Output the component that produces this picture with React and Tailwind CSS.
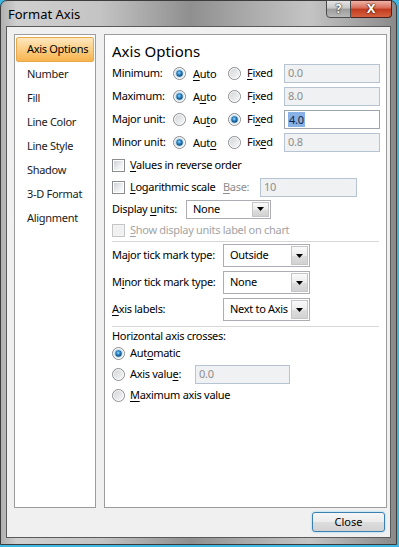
import React from "react";

const FONT = "font-['Noto_Sans',sans-serif]";

function U({ children }) {
  return <span className="underline underline-offset-[2px] decoration-[1px]">{children}</span>;
}

function Radio({ checked }) {
  return (
    <svg width="13" height="13" viewBox="0 0 13 13" className="shrink-0">
      <circle cx="6.5" cy="6.5" r="6" fill="url(#rbg)" stroke="#8a8c8e" strokeWidth="1" />
      <circle cx="6.5" cy="6.5" r="5" fill="none" stroke="#ffffff" strokeOpacity="0.7" strokeWidth="1" />
      {checked && (
        <>
          <circle cx="6.5" cy="6.5" r="4.2" fill="#bfe3f7" />
          <circle cx="6.5" cy="6.5" r="3.2" fill="url(#rdot)" />
        </>
      )}
    </svg>
  );
}

function Check({ disabled }) {
  return (
    <div
      className={`w-[13px] h-[13px] shrink-0 border p-px ${
        disabled ? "border-[#c2c4c6] bg-[#f4f4f4]" : "border-[#8a8c8e] bg-white"
      }`}
    >
      <div
        className={`w-full h-full ${
          disabled
            ? "bg-[#f0f0f0]"
            : "bg-[linear-gradient(135deg,#cfd2d6_0%,#eef0f2_60%,#fbfbfb_100%)]"
        }`}
      />
    </div>
  );
}

function Arrow() {
  return (
    <svg width="7" height="4" viewBox="0 0 7 4">
      <path d="M0 0 H7 L3.5 4 Z" fill="#000" />
    </svg>
  );
}

function Select({ value, w, h }) {
  return (
    <div className={`${w} ${h} border border-[#abadb3] bg-white flex items-stretch p-px`}>
      <div className="flex-1 flex items-center pl-[5px] text-black whitespace-nowrap overflow-hidden">{value}</div>
      <div className="w-[17px] border border-[#c5c5c5] bg-[linear-gradient(180deg,#fafafa_0%,#ececec_50%,#dedede_51%,#d2d2d2_100%)] flex items-center justify-center">
        <Arrow />
      </div>
    </div>
  );
}

function Input({ value, disabled, w, selected }) {
  return (
    <div
      className={`${w} h-[19px] border flex items-center pl-[3px] ${
        disabled
          ? "border-[#b5c3d3] bg-[#f0f1f3] text-[#8d8d8d]"
          : "border-[#a0a6ad] bg-white text-black"
      }`}
    >
      {selected ? (
        <span className="bg-[#88b1e6] text-[#0e2545] px-px leading-[15px]">{value}</span>
      ) : (
        value
      )}
    </div>
  );
}

function UnitRow({ label, autoChecked, auto, fixed, value, disabled, selected }) {
  return (
    <div className="h-[23px] flex items-center whitespace-nowrap">
      <div className="w-[61px]">{label}</div>
      <Radio checked={autoChecked} />
      <div className="w-[42px] pl-[7px] pt-[2px]">{auto}</div>
      <Radio checked={!autoChecked} />
      <div className="w-[43px] pl-[6px]">{fixed}</div>
      <Input value={value} disabled={disabled} w="w-[96px]" selected={selected} />
    </div>
  );
}

const items = ["Axis Options", "Number", "Fill", "Line Color", "Line Style", "Shadow", "3-D Format", "Alignment"];

export default function App() {
  return (
    <div className={`relative w-[399px] h-[547px] bg-[#3cb8e2] ${FONT} text-[11px] tracking-[-0.3px] text-black overflow-hidden`}>
      <svg width="0" height="0" className="absolute">
        <defs>
          <radialGradient id="rdot" cx="45%" cy="40%" r="65%">
            <stop offset="0" stopColor="#9fdcf9" />
            <stop offset="0.45" stopColor="#2a82c4" />
            <stop offset="1" stopColor="#0a3a66" />
          </radialGradient>
          <linearGradient id="rbg" x1="0" y1="0" x2="1" y2="1">
            <stop offset="0" stopColor="#cfd1d4" />
            <stop offset="1" stopColor="#fbfbfb" />
          </linearGradient>
        </defs>
      </svg>
      <div className="w-[397px] h-[545px] rounded-t-[7px] border border-[#3c3c3c] bg-[linear-gradient(90deg,#b0b0b0_0%,#cfcfcf_4%,#c4c4c4_25%,#8f8f8f_48%,#a9a9a9_62%,#c4c4c4_78%,#8a8a8a_100%)] flex flex-col">
        {/* Title bar */}
        <div className="h-[25px] flex items-start justify-between pr-[4px]">
          <div className="pl-[7px] pt-[4px] text-[13px] tracking-normal text-black whitespace-nowrap">Format Axis</div>
          <div className="flex -mt-px">
            <div className="w-[25px] h-[18px] rounded-bl-[4px] border border-[#4a4a4a] bg-[linear-gradient(180deg,#e4e4e4_0%,#c6c6c6_45%,#9c9c9c_50%,#b8b8b8_100%)] flex items-center justify-center text-white font-bold text-[12px] [text-shadow:0_0_2px_#222,0_0_1px_#000]">
              ?
            </div>
            <div className="w-[41px] h-[18px] rounded-br-[4px] border border-l-0 border-[#4a2020] bg-[linear-gradient(180deg,#efb4a8_0%,#d66a55_45%,#c13a1e_50%,#d5613f_100%)] flex items-center justify-center text-white font-bold text-[13px] [text-shadow:0_0_2px_#4a0d00,0_0_1px_#000]">
              X
            </div>
          </div>
        </div>
        {/* Content */}
        <div className="mx-[5px] border border-[#5a5a5a] bg-[#f0f0f0] h-[512px] pl-[7px] pr-[3px] pt-[7px] flex flex-col">
          <div className="flex gap-[8px] h-[474px]">
            {/* Left list */}
            <div className="w-[82px] h-full border border-[#9c9c9c] bg-white pt-[1px] px-px whitespace-nowrap">
              {items.map((it, i) =>
                i === 0 ? (
                  <div
                    key={it}
                    className="h-[25px] mt-px rounded-[2px] border border-[#e7a94c] bg-[linear-gradient(180deg,#fde8bf_0%,#fbd08a_45%,#f6b44f_100%)] flex items-center pl-[10px]"
                  >
                    {it}
                  </div>
                ) : (
                  <div key={it} className="h-[24px] flex items-center pl-[11px] text-[#1a1a1a]">
                    {it}
                  </div>
                )
              )}
            </div>
            {/* Right pane */}
            <div className="w-[283px] h-full border border-[#9c9c9c] bg-white pl-[7px] pr-[6px] flex flex-col whitespace-nowrap">
              <div className="h-[27px] pt-[6px] flex items-center text-[15px] tracking-normal leading-none">Axis Options</div>
              <UnitRow label="Minimum:" autoChecked auto={<><U>A</U>uto</>} fixed={<><U>F</U>ixed</>} value="0.0" disabled />
              <UnitRow label="Maximum:" autoChecked auto={<>A<U>u</U>to</>} fixed={<>F<U>i</U>xed</>} value="8.0" disabled />
              <UnitRow label="Major unit:" autoChecked={false} auto={<>Au<U>t</U>o</>} fixed={<>Fi<U>x</U>ed</>} value="4.0" selected />
              <UnitRow label="Minor unit:" autoChecked auto={<>Aut<U>o</U></>} fixed={<>Fix<U>e</U>d</>} value="0.8" disabled />
              <div className="h-[22px] flex items-center gap-[5px]">
                <Check />
                <span><U>V</U>alues in reverse order</span>
              </div>
              <div className="h-[22px] flex items-center">
                <Check />
                <span className="pl-[5px] w-[98px]"><U>L</U>ogarithmic scale</span>
                <span className="w-[37px] text-[#8d8d8d]"><U>B</U>ase:</span>
                <Input value="10" disabled w="w-[97px]" />
              </div>
              <div className="h-[22px] flex items-center">
                <span className="w-[74px]">Display <U>u</U>nits:</span>
                <Select value="None" w="w-[85px]" h="h-[19px]" />
              </div>
              <div className="h-[20px] flex items-center gap-[5px] text-[#a3a3a3]">
                <Check disabled />
                <span><U>S</U>how display units label on chart</span>
              </div>
              <div className="mt-px h-px bg-[#d6d6d6] mr-[1px]" />
              <div className="h-[27px] flex items-center">
                <span className="w-[111px]">Major tick mark type:</span>
                <Select value="Outside" w="w-[87px]" h="h-[23px]" />
              </div>
              <div className="h-[27px] flex items-center">
                <span className="w-[111px]">M<U>i</U>nor tick mark type:</span>
                <Select value="None" w="w-[87px]" h="h-[23px]" />
              </div>
              <div className="h-[27px] flex items-center">
                <span className="w-[111px]"><U>A</U>xis labels:</span>
                <Select value="Next to Axis" w="w-[87px]" h="h-[23px]" />
              </div>
              <div className="mt-[3px] h-px bg-[#d6d6d6] mr-[1px]" />
              <div className="h-[16px] pt-[2px] flex items-center">Horizontal axis crosses:</div>
              <div className="h-[21px] flex items-center gap-[5px]">
                <Radio checked />
                <span>Aut<U>o</U>matic</span>
              </div>
              <div className="h-[21px] flex items-center">
                <Radio />
                <span className="pl-[5px] w-[70px]">Axis valu<U>e</U>:</span>
                <Input value="0.0" disabled w="w-[95px]" />
              </div>
              <div className="h-[21px] flex items-center gap-[5px]">
                <Radio />
                <span><U>M</U>aximum axis value</span>
              </div>
            </div>
          </div>
          <div className="flex justify-end pr-[2px] pt-[4px]">
            <div className="w-[73px] h-[20px] rounded-[3px] border border-[#3c7fb1] shadow-[0_0_2px_#6fd0f7] bg-[linear-gradient(180deg,#f6f6f6_0%,#ececec_48%,#dddddd_52%,#d2d2d2_100%)] flex items-center justify-center text-black tracking-normal">
              Close
            </div>
          </div>
        </div>
      </div>
    </div>
  );
}
